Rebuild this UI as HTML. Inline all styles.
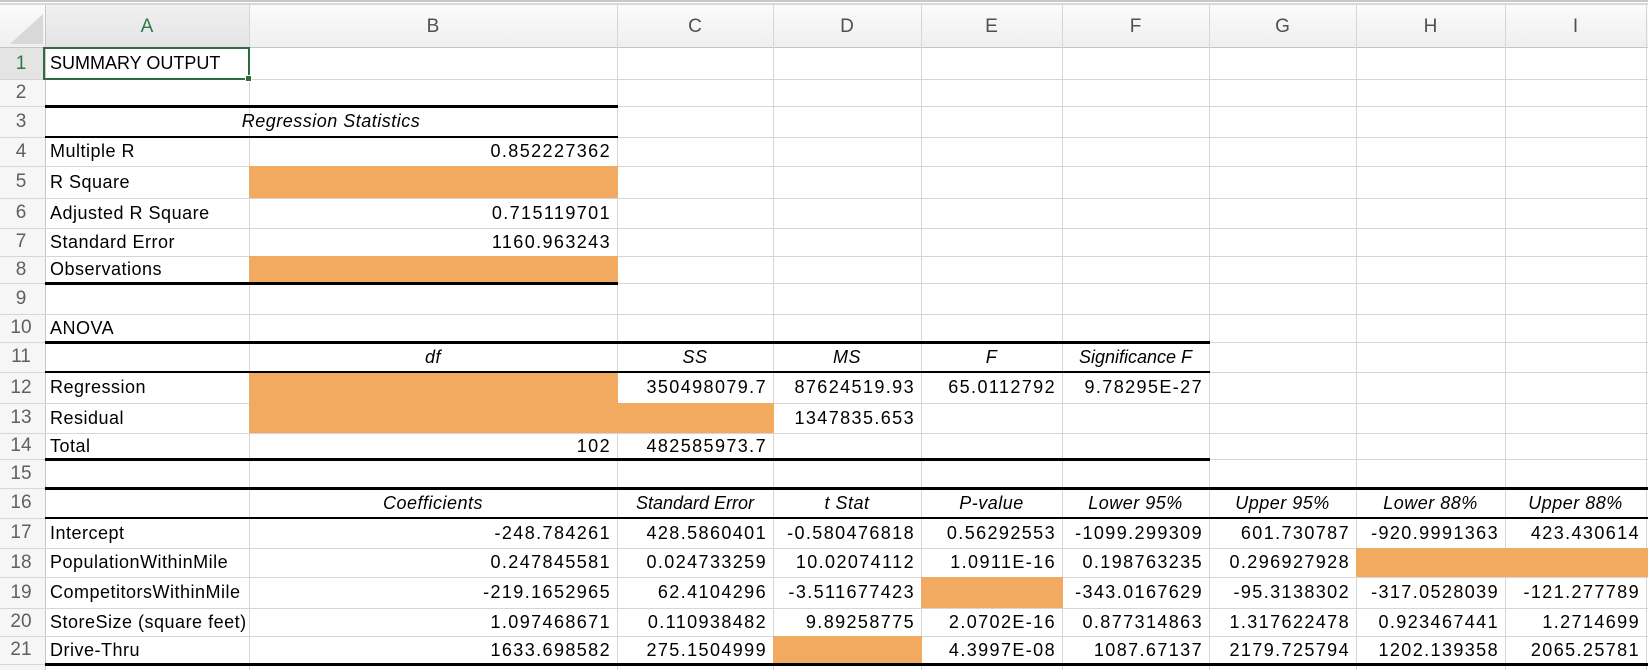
<!DOCTYPE html>
<html><head><meta charset="utf-8">
<style>
*{margin:0;padding:0;box-sizing:border-box}
body{width:1648px;height:670px;overflow:hidden;background:#fff;font-family:"Liberation Sans",sans-serif;font-size:18px;color:#000;position:relative}
div{position:absolute}
.t{white-space:nowrap;overflow:hidden}
.l{padding-left:5px;letter-spacing:0.5px}
.r{text-align:right;padding-right:6px;letter-spacing:1.4px}
.i{font-style:italic;text-align:center;letter-spacing:0.5px}
.v{width:1px;background:#d6d6d6;top:48px;height:622px}
.h{height:1px;background:#d6d6d6;left:0;width:1648px}
.k{background:#000}
.o{background:#f2a960}
.hd{top:5px;height:43px;line-height:43px;text-align:center;color:#505050;font-size:19px}
.rn{left:0;width:42px;text-align:center;color:#606060;font-size:19px}
</style></head><body>
<div style="left:0;top:0;width:1648px;height:2px;background:#c8c8c8"></div>
<div style="left:0;top:3px;width:1648px;height:2px;background:#d8d8d8"></div>
<div style="left:0;top:5px;width:1648px;height:43px;background:linear-gradient(#fbfbfb,#efefef)"></div>
<div style="left:0;top:48px;width:45px;height:622px;background:#f6f6f6"></div>
<div style="left:0;top:48px;width:45px;height:31px;background:#e4e4e4"></div>
<div style="left:10px;top:14px;width:0;height:0;border-left:33px solid transparent;border-bottom:30px solid #d8d8d8"></div>
<div style="left:0;top:47px;width:1648px;height:1px;background:#c4c4c4"></div>
<div style="left:45px;top:5px;width:204px;height:43px;background:linear-gradient(#f0f0f0,#e4e4e4)"></div>
<div class="v" style="left:45px;top:5px;height:665px;background:#c8c8c8"></div>
<div class="v" style="left:249px;top:5px;height:665px"></div>
<div class="v" style="left:617px;top:5px;height:665px"></div>
<div class="v" style="left:773px;top:5px;height:665px"></div>
<div class="v" style="left:921px;top:5px;height:665px"></div>
<div class="v" style="left:1062px;top:5px;height:665px"></div>
<div class="v" style="left:1209px;top:5px;height:665px"></div>
<div class="v" style="left:1356px;top:5px;height:665px"></div>
<div class="v" style="left:1505px;top:5px;height:665px"></div>
<div class="v" style="left:1646px;top:5px;height:665px"></div>
<div class="h" style="top:79px"></div><div class="h" style="top:106px"></div><div class="h" style="top:137px"></div>
<div class="h" style="top:166px"></div><div class="h" style="top:198px"></div><div class="h" style="top:228px"></div>
<div class="h" style="top:256px"></div><div class="h" style="top:283px"></div><div class="h" style="top:314px"></div>
<div class="h" style="top:342px"></div><div class="h" style="top:372px"></div><div class="h" style="top:403px"></div>
<div class="h" style="top:433px"></div><div class="h" style="top:459px"></div><div class="h" style="top:488px"></div>
<div class="h" style="top:518px"></div><div class="h" style="top:548px"></div><div class="h" style="top:577px"></div>
<div class="h" style="top:608px"></div><div class="h" style="top:636px"></div><div class="h" style="top:664px"></div>
<div class="hd" style="left:45px;width:204px;color:#2f7a45">A</div>
<div class="hd" style="left:249px;width:368px">B</div>
<div class="hd" style="left:617px;width:156px">C</div>
<div class="hd" style="left:773px;width:148px">D</div>
<div class="hd" style="left:921px;width:141px">E</div>
<div class="hd" style="left:1062px;width:147px">F</div>
<div class="hd" style="left:1209px;width:147px">G</div>
<div class="hd" style="left:1356px;width:149px">H</div>
<div class="hd" style="left:1505px;width:141px">I</div>
<div class="rn" style="top:48px;line-height:31px;color:#2f7a45">1</div>
<div class="rn" style="top:79px;line-height:27px">2</div>
<div class="rn" style="top:106px;line-height:31px">3</div>
<div class="rn" style="top:137px;line-height:29px">4</div>
<div class="rn" style="top:166px;line-height:32px">5</div>
<div class="rn" style="top:198px;line-height:30px">6</div>
<div class="rn" style="top:228px;line-height:28px">7</div>
<div class="rn" style="top:256px;line-height:27px">8</div>
<div class="rn" style="top:283px;line-height:31px">9</div>
<div class="rn" style="top:314px;line-height:28px">10</div>
<div class="rn" style="top:342px;line-height:30px">11</div>
<div class="rn" style="top:372px;line-height:31px">12</div>
<div class="rn" style="top:403px;line-height:30px">13</div>
<div class="rn" style="top:433px;line-height:26px">14</div>
<div class="rn" style="top:459px;line-height:29px">15</div>
<div class="rn" style="top:488px;line-height:30px">16</div>
<div class="rn" style="top:518px;line-height:30px">17</div>
<div class="rn" style="top:548px;line-height:29px">18</div>
<div class="rn" style="top:577px;line-height:31px">19</div>
<div class="rn" style="top:608px;line-height:28px">20</div>
<div class="rn" style="top:636px;line-height:28px">21</div>
<div class="o" style="left:249px;top:166px;width:369px;height:32px"></div>
<div class="o" style="left:249px;top:256px;width:369px;height:27px"></div>
<div class="o" style="left:249px;top:372px;width:369px;height:31px"></div>
<div class="o" style="left:249px;top:403px;width:525px;height:30px"></div>
<div class="o" style="left:921px;top:577px;width:142px;height:31px"></div>
<div class="o" style="left:1356px;top:548px;width:292px;height:29px"></div>
<div class="o" style="left:773px;top:636px;width:149px;height:28px"></div>
<div class="t l" style="left:45px;top:48px;width:204px;height:31px;line-height:31px;letter-spacing:0">SUMMARY OUTPUT</div>
<div class="t i" style="left:45px;top:106px;width:572px;height:31px;line-height:31px">Regression Statistics</div>
<div class="t l" style="left:45px;top:137px;width:204px;line-height:29px">Multiple R</div>
<div class="t l" style="left:45px;top:166px;width:204px;line-height:32px">R Square</div>
<div class="t l" style="left:45px;top:198px;width:204px;line-height:30px">Adjusted R Square</div>
<div class="t l" style="left:45px;top:228px;width:204px;line-height:28px">Standard Error</div>
<div class="t l" style="left:45px;top:256px;width:204px;line-height:27px">Observations</div>
<div class="t r" style="left:249px;top:137px;width:368px;line-height:29px">0.852227362</div>
<div class="t r" style="left:249px;top:198px;width:368px;line-height:30px">0.715119701</div>
<div class="t r" style="left:249px;top:228px;width:368px;line-height:28px">1160.963243</div>
<div class="t l" style="left:45px;top:314px;width:204px;line-height:28px">ANOVA</div>
<div class="t i" style="left:249px;top:342px;width:368px;line-height:30px">df</div>
<div class="t i" style="left:617px;top:342px;width:156px;line-height:30px">SS</div>
<div class="t i" style="left:773px;top:342px;width:148px;line-height:30px">MS</div>
<div class="t i" style="left:921px;top:342px;width:141px;line-height:30px">F</div>
<div class="t i" style="left:1062px;top:342px;width:147px;line-height:30px;letter-spacing:0">Significance F</div>
<div class="t l" style="left:45px;top:372px;width:204px;line-height:31px">Regression</div>
<div class="t r" style="left:617px;top:372px;width:156px;line-height:31px">350498079.7</div>
<div class="t r" style="left:773px;top:372px;width:148px;line-height:31px">87624519.93</div>
<div class="t r" style="left:921px;top:372px;width:141px;line-height:31px">65.0112792</div>
<div class="t r" style="left:1062px;top:372px;width:147px;line-height:31px">9.78295E-27</div>
<div class="t l" style="left:45px;top:403px;width:204px;line-height:30px">Residual</div>
<div class="t r" style="left:773px;top:403px;width:148px;line-height:30px">1347835.653</div>
<div class="t l" style="left:45px;top:433px;width:204px;line-height:26px">Total</div>
<div class="t r" style="left:249px;top:433px;width:368px;line-height:26px">102</div>
<div class="t r" style="left:617px;top:433px;width:156px;line-height:26px">482585973.7</div>
<div class="t i" style="left:249px;top:488px;width:368px;line-height:30px">Coefficients</div>
<div class="t i" style="left:617px;top:488px;width:156px;line-height:30px;letter-spacing:0">Standard Error</div>
<div class="t i" style="left:773px;top:488px;width:148px;line-height:30px">t Stat</div>
<div class="t i" style="left:921px;top:488px;width:141px;line-height:30px">P-value</div>
<div class="t i" style="left:1062px;top:488px;width:147px;line-height:30px">Lower 95%</div>
<div class="t i" style="left:1209px;top:488px;width:147px;line-height:30px">Upper 95%</div>
<div class="t i" style="left:1356px;top:488px;width:149px;line-height:30px">Lower 88%</div>
<div class="t i" style="left:1505px;top:488px;width:141px;line-height:30px">Upper 88%</div>
<div class="t l" style="left:45px;top:518px;width:204px;line-height:30px">Intercept</div>
<div class="t r" style="left:249px;top:518px;width:368px;line-height:30px">-248.784261</div>
<div class="t r" style="left:617px;top:518px;width:156px;line-height:30px">428.5860401</div>
<div class="t r" style="left:773px;top:518px;width:148px;line-height:30px">-0.580476818</div>
<div class="t r" style="left:921px;top:518px;width:141px;line-height:30px">0.56292553</div>
<div class="t r" style="left:1062px;top:518px;width:147px;line-height:30px">-1099.299309</div>
<div class="t r" style="left:1209px;top:518px;width:147px;line-height:30px">601.730787</div>
<div class="t r" style="left:1356px;top:518px;width:149px;line-height:30px">-920.9991363</div>
<div class="t r" style="left:1505px;top:518px;width:141px;line-height:30px">423.430614</div>
<div class="t l" style="left:45px;top:548px;width:204px;line-height:29px">PopulationWithinMile</div>
<div class="t r" style="left:249px;top:548px;width:368px;line-height:29px">0.247845581</div>
<div class="t r" style="left:617px;top:548px;width:156px;line-height:29px">0.024733259</div>
<div class="t r" style="left:773px;top:548px;width:148px;line-height:29px">10.02074112</div>
<div class="t r" style="left:921px;top:548px;width:141px;line-height:29px">1.0911E-16</div>
<div class="t r" style="left:1062px;top:548px;width:147px;line-height:29px">0.198763235</div>
<div class="t r" style="left:1209px;top:548px;width:147px;line-height:29px">0.296927928</div>
<div class="t l" style="left:45px;top:577px;width:204px;line-height:31px">CompetitorsWithinMile</div>
<div class="t r" style="left:249px;top:577px;width:368px;line-height:31px">-219.1652965</div>
<div class="t r" style="left:617px;top:577px;width:156px;line-height:31px">62.4104296</div>
<div class="t r" style="left:773px;top:577px;width:148px;line-height:31px">-3.511677423</div>
<div class="t r" style="left:1062px;top:577px;width:147px;line-height:31px">-343.0167629</div>
<div class="t r" style="left:1209px;top:577px;width:147px;line-height:31px">-95.3138302</div>
<div class="t r" style="left:1356px;top:577px;width:149px;line-height:31px">-317.0528039</div>
<div class="t r" style="left:1505px;top:577px;width:141px;line-height:31px">-121.277789</div>
<div class="t l" style="left:45px;top:608px;width:204px;line-height:28px">StoreSize (square feet)</div>
<div class="t r" style="left:249px;top:608px;width:368px;line-height:28px">1.097468671</div>
<div class="t r" style="left:617px;top:608px;width:156px;line-height:28px">0.110938482</div>
<div class="t r" style="left:773px;top:608px;width:148px;line-height:28px">9.89258775</div>
<div class="t r" style="left:921px;top:608px;width:141px;line-height:28px">2.0702E-16</div>
<div class="t r" style="left:1062px;top:608px;width:147px;line-height:28px">0.877314863</div>
<div class="t r" style="left:1209px;top:608px;width:147px;line-height:28px">1.317622478</div>
<div class="t r" style="left:1356px;top:608px;width:149px;line-height:28px">0.923467441</div>
<div class="t r" style="left:1505px;top:608px;width:141px;line-height:28px">1.2714699</div>
<div class="t l" style="left:45px;top:636px;width:204px;line-height:28px">Drive-Thru</div>
<div class="t r" style="left:249px;top:636px;width:368px;line-height:28px">1633.698582</div>
<div class="t r" style="left:617px;top:636px;width:156px;line-height:28px">275.1504999</div>
<div class="t r" style="left:921px;top:636px;width:141px;line-height:28px">4.3997E-08</div>
<div class="t r" style="left:1062px;top:636px;width:147px;line-height:28px">1087.67137</div>
<div class="t r" style="left:1209px;top:636px;width:147px;line-height:28px">2179.725794</div>
<div class="t r" style="left:1356px;top:636px;width:149px;line-height:28px">1202.139358</div>
<div class="t r" style="left:1505px;top:636px;width:141px;line-height:28px">2065.25781</div>
<div class="k" style="left:45px;top:105px;width:573px;height:3px"></div>
<div class="k" style="left:45px;top:136px;width:573px;height:2px"></div>
<div class="k" style="left:45px;top:282px;width:573px;height:3px"></div>
<div class="k" style="left:45px;top:341px;width:1165px;height:3px"></div>
<div class="k" style="left:45px;top:371px;width:1165px;height:2px"></div>
<div class="k" style="left:45px;top:458px;width:1165px;height:3px"></div>
<div class="k" style="left:45px;top:487px;width:1603px;height:3px"></div>
<div class="k" style="left:45px;top:517px;width:1603px;height:2px"></div>
<div class="k" style="left:45px;top:663px;width:1603px;height:3px"></div>
<div style="left:43px;top:47px;width:207px;height:33px;border:2px solid #2e6b3e"></div>
<div style="left:245px;top:75px;width:7px;height:7px;background:#2e6b3e;border:1px solid #fff"></div>
</body></html>
